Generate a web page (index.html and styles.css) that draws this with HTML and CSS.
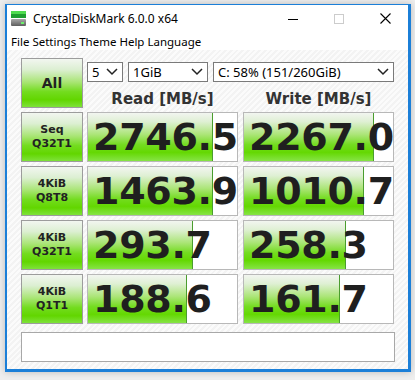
FILE: index.html
```html
<!DOCTYPE html>
<html>
<head>
<meta charset="utf-8">
<link rel="stylesheet" href="styles.css">
</head>
<body>
<div class="window">
  <div class="titlebar">
    <svg class="appicon" width="16" height="16" viewBox="0 0 16 16">
      <defs>
        <linearGradient id="dg" x1="0" y1="0" x2="0" y2="1">
          <stop offset="0" stop-color="#a8a8a8"/>
          <stop offset="1" stop-color="#5e5e5e"/>
        </linearGradient>
      </defs>
      <rect x="0" y="0" width="15" height="3" fill="#4fdc4f"/>
      <rect x="0" y="3" width="15" height="4" fill="#1f9f2f"/>
      <rect x="0" y="8" width="15" height="7" rx="1" fill="url(#dg)"/>
      <rect x="10" y="11" width="3" height="2" fill="#6cf06c"/>
    </svg>
    <span class="title">CrystalDiskMark 6.0.0 x64</span>
    <div class="caption">
      <div class="cbtn">
        <svg width="10" height="10" viewBox="0 0 10 10"><line x1="0" y1="5.5" x2="10" y2="5.5" stroke="#000" stroke-width="1"/></svg>
      </div>
      <div class="cbtn">
        <svg width="10" height="10" viewBox="0 0 10 10"><rect x="0.5" y="0.5" width="9" height="9" fill="none" stroke="#cccccc" stroke-width="1"/></svg>
      </div>
      <div class="cbtn">
        <svg width="11" height="11" viewBox="0 0 11 11"><path d="M0.5 0.5 L10.5 10.5 M10.5 0.5 L0.5 10.5" stroke="#000" stroke-width="1.1" fill="none"/></svg>
      </div>
    </div>
  </div>
  <div class="menubar">
    <span>File</span><span>Settings</span><span>Theme</span><span>Help</span><span>Language</span>
  </div>
  <div class="content">
    <div class="grid">
      <div class="btn btn-all">All</div>
      <div class="top">
        <div class="combos">
          <div class="combo c-count"><span>5</span><svg class="chev" width="12" height="8" viewBox="0 0 12 8"><polyline points="1,1 6,6 11,1" fill="none" stroke="#222" stroke-width="1.5"/></svg></div>
          <div class="combo c-size"><span>1GiB</span><svg class="chev" width="12" height="8" viewBox="0 0 12 8"><polyline points="1,1 6,6 11,1" fill="none" stroke="#222" stroke-width="1.5"/></svg></div>
          <div class="combo c-drive"><span>C: 58% (151/260GiB)</span><svg class="chev" width="12" height="8" viewBox="0 0 12 8"><polyline points="1,1 6,6 11,1" fill="none" stroke="#222" stroke-width="1.5"/></svg></div>
        </div>
        <div class="heads">
          <div class="head">Read [MB/s]</div>
          <div class="head">Write [MB/s]</div>
        </div>
      </div>

      <div class="btn">Seq<br>Q32T1</div>
      <div class="cell"><div class="bar" style="width:125px"></div><span class="val">2746.5</span></div>
      <div class="cell"><div class="bar" style="width:130px"></div><span class="val">2267.0</span></div>

      <div class="btn">4KiB<br>Q8T8</div>
      <div class="cell"><div class="bar" style="width:125px"></div><span class="val">1463.9</span></div>
      <div class="cell"><div class="bar" style="width:120px"></div><span class="val">1010.7</span></div>

      <div class="btn">4KiB<br>Q32T1</div>
      <div class="cell"><div class="bar" style="width:105px"></div><span class="val">293.7</span></div>
      <div class="cell"><div class="bar" style="width:102px"></div><span class="val">258.3</span></div>

      <div class="btn">4KiB<br>Q1T1</div>
      <div class="cell"><div class="bar" style="width:99px"></div><span class="val">188.6</span></div>
      <div class="cell"><div class="bar" style="width:96px"></div><span class="val">161.7</span></div>
    </div>
    <div class="status"></div>
  </div>
</div>
</body>
</html>
```
FILE: styles.css
```css
* { box-sizing: border-box; }
html, body { margin: 0; padding: 0; }
body {
  width: 415px;
  height: 380px;
  background: #eeeeee;
  padding: 4px 0 0 5px;
  overflow: hidden;
  font-family: "Noto Sans", "Open Sans", sans-serif;
}
.window {
  width: 406px;
  height: 368px;
  border-style: solid;
  border-color: #1b7fd8;
  border-width: 1px 3px 3px 2px;
  background: #ffffff;
  box-shadow: 0 0 7px rgba(0,0,0,0.22);
  display: flex;
  flex-direction: column;
}
.titlebar {
  height: 27px;
  display: flex;
  align-items: center;
  background: #fff;
}
.appicon { margin-left: 4px; flex: none; }
.title {
  margin-left: 6px;
  font-size: 12px;
  color: #000;
  white-space: nowrap;
}
.caption {
  margin-left: auto;
  display: flex;
  height: 27px;
}
.cbtn {
  width: 46px;
  height: 27px;
  display: flex;
  align-items: center;
  justify-content: center;
}
.menubar {
  height: 18px;
  display: flex;
  align-items: center;
  padding-left: 4px;
  font-size: 11.5px;
  color: #000;
  gap: 3px;
  background: #fff;
}
.content {
  flex: 1;
  padding: 8px 0 0 14px;
  background: repeating-linear-gradient(135deg, #fbfbfb 0 2px, #f3f3f3 2px 4px);
}
.grid {
  display: grid;
  grid-template-columns: 66px 156px 151px;
  grid-auto-rows: 50px;
  row-gap: 4px;
}
.btn {
  width: 62px;
  height: 50px;
  border: 1px solid #9c9c9c;
  background: linear-gradient(to bottom, #f2f6f0 0%, #dcefd2 22%, #a9e575 48%, #73dc1f 68%, #62d600 85%, #7ee23a 100%);
  display: flex;
  align-items: center;
  justify-content: center;
  text-align: center;
  font-family: "DejaVu Sans", sans-serif;
  font-weight: bold;
  font-size: 11px;
  line-height: 14px;
  color: #222;
}
.btn-all { font-size: 14px; }
.top {
  grid-column: 2 / 4;
  display: flex;
  flex-direction: column;
  padding-top: 4px;
}
.combos {
  display: flex;
  gap: 5px;
  height: 20px;
}
.combo {
  height: 20px;
  background: #fff;
  border: 1px solid #7a7a7a;
  display: flex;
  align-items: center;
  padding-left: 4px;
  padding-right: 4px;
  font-size: 13px;
  color: #000;
}
.combo span { flex: 1; white-space: nowrap; }
.chev { flex: none; }
.c-count { width: 36px; }
.c-size { width: 80px; }
.c-drive { width: 181px; }
.heads {
  display: flex;
  gap: 5px;
  margin-top: 9px;
}
.head {
  width: 151px;
  text-align: center;
  font-family: "DejaVu Sans", sans-serif;
  font-weight: bold;
  font-size: 15px;
  line-height: 16px;
  color: #333;
  white-space: nowrap;
}
.cell {
  position: relative;
  width: 151px;
  height: 50px;
  border: 1px solid #b8b8b8;
  background: #fff;
  display: flex;
  align-items: center;
  padding-left: 5px;
  overflow: hidden;
}
.bar {
  position: absolute;
  left: 0;
  top: 0;
  bottom: 0;
  background: linear-gradient(to bottom, #f2f5f0 0%, #dff0d4 18%, #abe577 45%, #74dc20 66%, #64d802 82%, #86e445 100%);
  border-right: 1px solid #4a9d2e;
}
.val {
  position: relative;
  font-family: "DejaVu Sans", sans-serif;
  font-weight: bold;
  font-size: 38px;
  line-height: 40px;
  color: #1f1f1f;
  white-space: nowrap;
  letter-spacing: -0.3px;
}
.status {
  margin-top: 8px;
  width: 374px;
  height: 30px;
  background: #fff;
  border: 1px solid #a8a8a8;
}
```
